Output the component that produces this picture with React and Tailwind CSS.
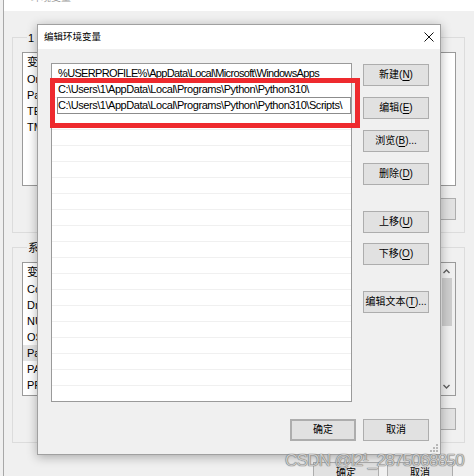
// Windows "编辑环境变量" dialog over the 环境变量 window
import React from 'react';

function Btn({ children, className = '' }) {
  return (
    <div className={`h-[22px] shrink-0 flex items-center justify-center bg-[#e1e1e1] border border-[#adadad] text-[10px] leading-none text-black whitespace-nowrap ${className}`}>
      {children}
    </div>
  );
}

function Key({ k }) {
  return <span className="underline underline-offset-[2px]">{k}</span>;
}

function Group({ label, className = '', children }) {
  return (
    <div className={`border border-[#dcdcdc] flex flex-col pl-[9px] pr-[8px] pb-[12px] ${className}`}>
      <div className="-mt-[8px] ml-[5px] mb-[6px] px-[1px] w-fit bg-[#f0f0f0] leading-[16px] whitespace-nowrap">{label}</div>
      {children}
    </div>
  );
}

const userVars = ['OneDrive', 'Path', 'TEMP', 'TMP'];
const sysVars = ['ComSpec', 'DriverData', 'NUMBER_OF_PROCESSORS', 'OS', 'Path', 'PATHEXT', 'PROCESSOR_ARCHITECTURE'];

export default function App() {
  const emptyRows = Array.from({ length: 18 });

  return (
    <div className="relative w-[474px] h-[476px] overflow-hidden bg-[#f0f0f0] text-[11px] text-black font-['Liberation_Sans','Noto_Sans_CJK_SC',sans-serif]">
      {/* Background window: 环境变量 */}
      <div className="flex flex-col h-full ml-[3px] border-l border-[#a8a8a8]">
        <div className="h-[11px] shrink-0 bg-white overflow-hidden pl-[27px]">
          <div className="-mt-[10px] leading-[16px] text-[10px] text-[#a0a0a0]">环境变量</div>
        </div>
        <div className="flex-1 flex flex-col pl-[8px] pr-[9px]">
          <Group label="1 的用户变量(U)" className="mt-[26px]">
            <div className="h-[134px] bg-white border border-[#9a9a9a] flex flex-col pl-[4px] overflow-hidden">
              <div className="h-[18px] shrink-0 flex items-center">变量</div>
              {userVars.map(v => (
                <div key={v} className="h-[16px] shrink-0 flex items-center">{v}</div>
              ))}
            </div>
            <div className="mt-[12px] flex justify-end gap-[8px]">
              <Btn className="w-[75px]">新建(<Key k="N" />)...</Btn>
              <Btn className="w-[75px]">编辑(<Key k="E" />)...</Btn>
              <Btn className="w-[75px]">删除(<Key k="D" />)</Btn>
            </div>
          </Group>
          <Group label="系统变量(S)" className="mt-[14px]">
            <div className="h-[134px] bg-white border border-[#9a9a9a] flex overflow-hidden">
              <div className="flex-1 flex flex-col">
                <div className="h-[18px] shrink-0 flex items-center pl-[4px]">变量</div>
                {sysVars.map(v => (
                  <div key={v} className={`h-[16px] shrink-0 flex items-center pl-[4px] ${v === 'Path' ? 'bg-[#e5e5e5]' : ''}`}>{v}</div>
                ))}
              </div>
              <div className="w-[17px] shrink-0 bg-[#f0f0f0] flex flex-col items-center">
                <svg width="9" height="14" viewBox="0 0 9 14" className="mt-[1px]">
                  <path d="M1.5 9 L4.5 6 L7.5 9" fill="none" stroke="#606060" strokeWidth="1.4" />
                </svg>
                <div className="w-[10px] h-[48px] bg-[#cdcdcd]" />
                <div className="flex-1" />
                <svg width="9" height="14" viewBox="0 0 9 14" className="mb-[1px]">
                  <path d="M1.5 5 L4.5 8 L7.5 5" fill="none" stroke="#606060" strokeWidth="1.4" />
                </svg>
              </div>
            </div>
            <div className="mt-[12px] flex justify-end gap-[8px]">
              <Btn className="w-[75px]">新建(<Key k="W" />)...</Btn>
              <Btn className="w-[75px]">编辑(<Key k="I" />)...</Btn>
              <Btn className="w-[75px]">删除(<Key k="L" />)</Btn>
            </div>
          </Group>
          <div className="mt-[19px] flex justify-end gap-[8px] pr-[12px]">
            <Btn className="w-[66px]">确定</Btn>
            <Btn className="w-[66px]">取消</Btn>
          </div>
        </div>
      </div>

      {/* Front dialog: 编辑环境变量 */}
      <div className="absolute left-[37px] top-[24px] w-[404px] h-[431px] bg-[#f0f0f0] border border-[#a0a0a0] shadow-[0_2px_10px_rgba(0,0,0,0.3)] flex flex-col">
        <div className="h-[24px] shrink-0 bg-white flex items-center justify-between pl-[6px] pr-[6px]">
          <span className="text-[9.5px]">编辑环境变量</span>
          <svg width="10" height="10" viewBox="0 0 10 10">
            <path d="M0.5 0.5 L9.5 9.5 M9.5 0.5 L0.5 9.5" stroke="#111" strokeWidth="1" />
          </svg>
        </div>

        <div className="flex-1 flex flex-col pt-[14px] pl-[13px] pr-[11px] pb-[13px]">
          <div className="flex gap-[11px]">
            <div className="w-[301px] h-[339px] bg-white border border-[#9a9a9a] pt-[2px] flex flex-col overflow-hidden tracking-[-0.45px]">
              <div className="h-[16px] shrink-0 flex items-center pl-[6px] border-b border-[#f0f0f0] whitespace-nowrap tracking-[-0.65px]">
                {'%USERPROFILE%\\AppData\\Local\\Microsoft\\WindowsApps'}
              </div>
              <div className="h-[16px] shrink-0 flex items-center pl-[6px] border-b border-[#f0f0f0] whitespace-nowrap">
                {'C:\\Users\\1\\AppData\\Local\\Programs\\Python\\Python310\\'}
              </div>
              <div className="h-[16px] shrink-0 pl-[5px]">
                <div className="-mt-[1px] h-[17px] bg-white border border-[#8c8c8c] flex items-center whitespace-nowrap">
                  {'C:\\Users\\1\\AppData\\Local\\Programs\\Python\\Python310\\Scripts\\'}
                </div>
              </div>
              {emptyRows.map((_, i) => (
                <div key={i} className="h-[16px] shrink-0 border-b border-[#f0f0f0]" />
              ))}
            </div>

            <div className="w-[66px] flex flex-col pt-[1px]">
              <Btn>新建(<Key k="N" />)</Btn>
              <Btn className="mt-[11px]">编辑(<Key k="E" />)</Btn>
              <Btn className="mt-[11px]">浏览(<Key k="B" />)...</Btn>
              <Btn className="mt-[11px]">删除(<Key k="D" />)</Btn>
              <Btn className="mt-[26px]">上移(<Key k="U" />)</Btn>
              <Btn className="mt-[10px]">下移(<Key k="O" />)</Btn>
              <Btn className="mt-[26px]">编辑文本(<Key k="T" />)...</Btn>
            </div>
          </div>

          <div className="mt-[17px] flex justify-end gap-[7px]">
            <Btn className="w-[66px] border-2 border-[#0078d7]">确定</Btn>
            <Btn className="w-[66px]">取消</Btn>
          </div>
        </div>

        {/* size grip */}
        <svg width="10" height="10" viewBox="0 0 10 10" className="absolute right-[1px] bottom-[1px]">
          <rect x="7" y="1" width="2" height="2" fill="#b8b8b8" />
          <rect x="4" y="4" width="2" height="2" fill="#b8b8b8" />
          <rect x="7" y="4" width="2" height="2" fill="#b8b8b8" />
          <rect x="1" y="7" width="2" height="2" fill="#b8b8b8" />
          <rect x="4" y="7" width="2" height="2" fill="#b8b8b8" />
          <rect x="7" y="7" width="2" height="2" fill="#b8b8b8" />
        </svg>

        {/* red highlight box */}
        <div className="absolute left-[12px] top-[53px] w-[310px] h-[50px] border-[5px] border-[#ee2a2e]" />
      </div>

      {/* watermark */}
      <div className="absolute left-[285px] top-[452px] text-[17px] leading-none tracking-[-0.7px] text-[#c8c8c8] [text-shadow:0_0_1px_#6a6a6a,0_0_1px_#6a6a6a] whitespace-nowrap">
        CSDN @l2¹_2875068850
      </div>
    </div>
  );
}
